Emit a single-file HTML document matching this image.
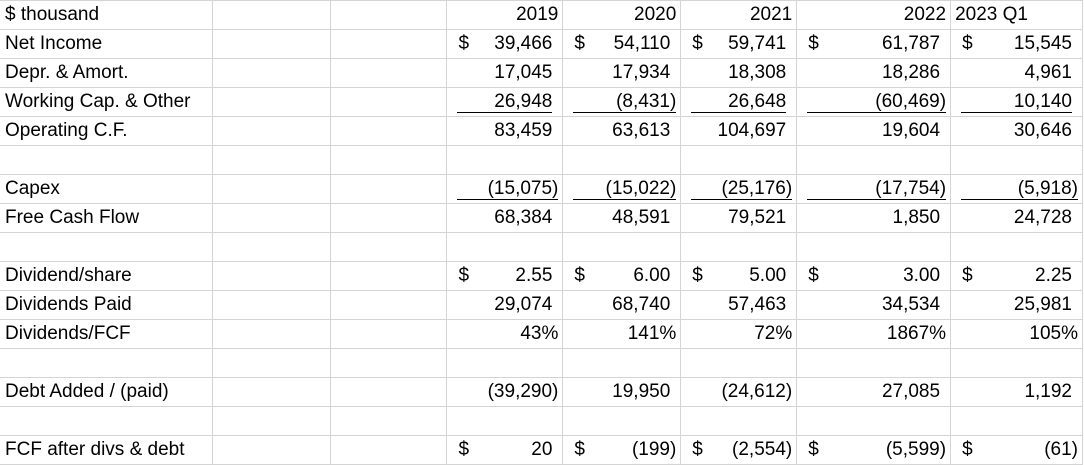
<!DOCTYPE html>
<html><head><meta charset="utf-8"><style>
*{margin:0;padding:0;box-sizing:border-box}
body{width:1084px;height:465px;background:#fff;overflow:hidden;font-family:"Liberation Sans",Arial,sans-serif;font-size:19px;color:#000}
table{border-collapse:collapse;table-layout:fixed;position:absolute;left:-1px;top:0}
tr{height:29px}
td{height:29px;border:1px solid #d4d4d4;padding:0;white-space:nowrap;position:relative;line-height:28px;vertical-align:top;overflow:visible}
td.l{padding-left:5px}
td.n{text-align:right;padding-right:10px}
td.ng{text-align:right;padding-right:4px}
td.y{text-align:right;padding-right:4px}
td.p{text-align:right;padding-right:4px}
td.q{text-align:left;padding-left:4px}
.d{position:absolute;left:11px;top:0;line-height:28px}
td.u::after{content:"";position:absolute;left:10px;bottom:3px;border-bottom:1px solid #000}
td.u.n::after{right:10px}
td.u.ng::after{right:4px}
</style></head><body>
<table>
<colgroup><col style="width:213px"><col style="width:118px"><col style="width:117px"><col style="width:116px"><col style="width:118px"><col style="width:116px"><col style="width:154px"><col style="width:132px"></colgroup>
<tr><td class="l">$ thousand</td><td></td><td></td><td class="y">2019</td><td class="y">2020</td><td class="y">2021</td><td class="y">2022</td><td class="q">2023 Q1</td></tr>
<tr><td class="l">Net Income</td><td></td><td></td><td class="n"><span class="d">$</span>39,466</td><td class="n"><span class="d">$</span>54,110</td><td class="n"><span class="d">$</span>59,741</td><td class="n"><span class="d">$</span>61,787</td><td class="n"><span class="d">$</span>15,545</td></tr>
<tr><td class="l">Depr. &amp; Amort.</td><td></td><td></td><td class="n">17,045</td><td class="n">17,934</td><td class="n">18,308</td><td class="n">18,286</td><td class="n">4,961</td></tr>
<tr><td class="l">Working Cap. &amp; Other</td><td></td><td></td><td class="n u">26,948</td><td class="ng u">(8,431)</td><td class="n u">26,648</td><td class="ng u">(60,469)</td><td class="n u">10,140</td></tr>
<tr><td class="l">Operating C.F.</td><td></td><td></td><td class="n">83,459</td><td class="n">63,613</td><td class="n">104,697</td><td class="n">19,604</td><td class="n">30,646</td></tr>
<tr><td></td><td></td><td></td><td></td><td></td><td></td><td></td><td></td></tr>
<tr><td class="l">Capex</td><td></td><td></td><td class="ng u">(15,075)</td><td class="ng u">(15,022)</td><td class="ng u">(25,176)</td><td class="ng u">(17,754)</td><td class="ng u">(5,918)</td></tr>
<tr><td class="l">Free Cash Flow</td><td></td><td></td><td class="n">68,384</td><td class="n">48,591</td><td class="n">79,521</td><td class="n">1,850</td><td class="n">24,728</td></tr>
<tr><td></td><td></td><td></td><td></td><td></td><td></td><td></td><td></td></tr>
<tr><td class="l">Dividend/share</td><td></td><td></td><td class="n"><span class="d">$</span>2.55</td><td class="n"><span class="d">$</span>6.00</td><td class="n"><span class="d">$</span>5.00</td><td class="n"><span class="d">$</span>3.00</td><td class="n"><span class="d">$</span>2.25</td></tr>
<tr><td class="l">Dividends Paid</td><td></td><td></td><td class="n">29,074</td><td class="n">68,740</td><td class="n">57,463</td><td class="n">34,534</td><td class="n">25,981</td></tr>
<tr><td class="l">Dividends/FCF</td><td></td><td></td><td class="p">43%</td><td class="p">141%</td><td class="p">72%</td><td class="p">1867%</td><td class="p">105%</td></tr>
<tr><td></td><td></td><td></td><td></td><td></td><td></td><td></td><td></td></tr>
<tr><td class="l">Debt Added / (paid)</td><td></td><td></td><td class="ng">(39,290)</td><td class="n">19,950</td><td class="ng">(24,612)</td><td class="n">27,085</td><td class="n">1,192</td></tr>
<tr><td></td><td></td><td></td><td></td><td></td><td></td><td></td><td></td></tr>
<tr><td class="l">FCF after divs &amp; debt</td><td></td><td></td><td class="n"><span class="d">$</span>20</td><td class="ng"><span class="d">$</span>(199)</td><td class="ng"><span class="d">$</span>(2,554)</td><td class="ng"><span class="d">$</span>(5,599)</td><td class="ng"><span class="d">$</span>(61)</td></tr>
</table>
</body></html>
